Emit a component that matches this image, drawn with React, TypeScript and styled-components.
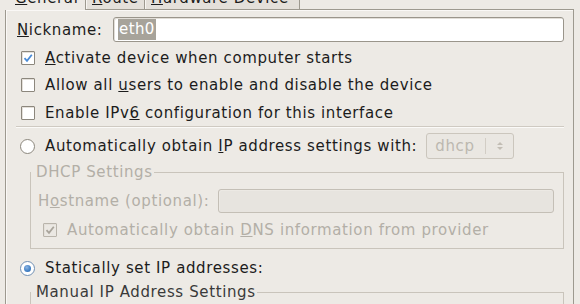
import React from 'react';
import styled, { createGlobalStyle } from 'styled-components';

const GlobalStyle = createGlobalStyle`
  html, body {
    margin: 0;
    padding: 0;
    background: #edeae5;
  }
  body {
    font-family: "DejaVu Sans", "Liberation Sans", sans-serif;
    font-size: 15px;
    letter-spacing: 0.62px;
    color: #1c1c1c;
  }
`;

const Page = styled.div`
  width: 580px;
  height: 304px;
  overflow: hidden;
  background: #edeae5;
`;

const TabBar = styled.div`
  display: flex;
  height: 24px;
  margin-top: -14px;
  padding-left: 5px;
`;

const Tab = styled.div<{ $active?: boolean; $width: number }>`
  box-sizing: border-box;
  width: ${(p) => p.$width}px;
  padding-left: ${(p) => (p.$active ? 10 : 6)}px;
  padding-top: 2px;
  border: 1px solid #9d998f;
  border-bottom: ${(p) => (p.$active ? 'none' : '1px solid #9d998f')};
  border-left: ${(p) => (p.$active ? 'none' : '1px solid #9d998f')};
  background: ${(p) => (p.$active ? '#edeae5' : '#e4e0da')};
  box-shadow: ${(p) => (p.$active ? 'none' : 'inset 1px 1px 0 #f7f5f2')};
  margin-left: ${(p) => (p.$active ? 0 : -1)}px;
  white-space: nowrap;
  overflow: hidden;
  position: relative;
  z-index: ${(p) => (p.$active ? 1 : 0)};
`;

const Panel = styled.div`
  box-sizing: border-box;
  width: 569px;
  height: 300px;
  margin-left: 5px;
  margin-top: -1px;
  border: 1px solid #9d998f;
  border-bottom: none;
  box-shadow: inset 1px 1px 0 #faf8f6;
  padding: 7px 9px 0 10px;
  display: flex;
  flex-direction: column;
`;

const Row = styled.div<{ $h: number; $indent?: number; $top?: number; $bottom?: number }>`
  display: flex;
  align-items: center;
  height: ${(p) => p.$h}px;
  padding-left: ${(p) => p.$indent ?? 0}px;
  margin-top: ${(p) => p.$top ?? 0}px;
  margin-bottom: ${(p) => p.$bottom ?? 0}px;
  flex-shrink: 0;
`;

const Label = styled.span<{ $disabled?: boolean; $w?: number }>`
  color: ${(p) => (p.$disabled ? '#b3afa7' : '#1c1c1c')};
  width: ${(p) => (p.$w ? `${p.$w}px` : 'auto')};
  flex-shrink: 0;
  white-space: nowrap;
`;

const TextInput = styled.div<{ $disabled?: boolean }>`
  box-sizing: border-box;
  flex: 1;
  height: 100%;
  border: 1px solid ${(p) => (p.$disabled ? '#c4bfb6' : '#9a958b')};
  border-radius: 3px;
  background: ${(p) => (p.$disabled ? '#e7e4df' : '#ffffff')};
  box-shadow: inset 1px 1px 0 ${(p) => (p.$disabled ? '#ece9e4' : '#e2ded8')};
  display: flex;
  align-items: center;
  padding-left: 4px;
`;

const Selection = styled.span`
  background: #a7a39a;
  color: #ffffff;
  padding: 1px 1px 2px 1px;
  letter-spacing: 0.4px;
`;

const Box = styled.span<{ $disabled?: boolean }>`
  box-sizing: border-box;
  width: 14px;
  height: 14px;
  border: 1px solid ${(p) => (p.$disabled ? '#b9b4ab' : '#8c877d')};
  border-radius: 1px;
  background: ${(p) => (p.$disabled ? '#ebe8e3' : '#ffffff')};
  box-shadow: inset 1px 1px 0 #e4e0da;
  display: flex;
  align-items: center;
  justify-content: center;
  flex-shrink: 0;
`;

const Radio = styled.span<{ $on?: boolean }>`
  box-sizing: border-box;
  width: 15px;
  height: 15px;
  border-radius: 50%;
  border: 1px solid ${(p) => (p.$on ? '#6f8fb3' : '#8c877d')};
  background: #ffffff;
  display: flex;
  align-items: center;
  justify-content: center;
  flex-shrink: 0;
`;

const Dot = styled.span`
  width: 7px;
  height: 7px;
  border-radius: 50%;
  background: radial-gradient(circle at 40% 35%, #8fb6e4 0%, #3f7fc4 60%, #2e63a3 100%);
`;

const Gap = styled.span<{ $w: number }>`
  width: ${(p) => p.$w}px;
  flex-shrink: 0;
`;

const Separator = styled.div`
  height: 1px;
  background: #cfcac2;
  border-bottom: 1px solid #fbfaf8;
  margin: 0 0 5px 0;
  flex-shrink: 0;
`;

const Combo = styled.div`
  box-sizing: border-box;
  width: 88px;
  height: 26px;
  margin-left: 9px;
  border: 1px solid #cbc6bd;
  border-radius: 3px;
  background: #eae7e2;
  display: flex;
  align-items: center;
  color: #bcb8b0;
`;

const ComboText = styled.span`
  flex: 1;
  padding-left: 8px;
`;

const ComboArrow = styled.span`
  width: 27px;
  height: 16px;
  border-left: 1px solid #d2cdc5;
  display: flex;
  align-items: center;
  justify-content: center;
`;

const Frame = styled.fieldset<{ $top: number }>`
  margin: ${(p) => p.$top}px 0 0 14px;
  padding: 0 9px 0 7px;
  border: 1px solid #c9c4bb;
  border-radius: 0;
  min-width: 0;
  flex-shrink: 0;
  display: flex;
  flex-direction: column;
`;

const Legend = styled.legend<{ $disabled?: boolean }>`
  padding: 0 1px 0 5px;
  margin-left: -7px;
  height: 16px;
  line-height: 16px;
  color: ${(p) => (p.$disabled ? '#b3afa7' : '#3a3a3a')};
`;

const CheckMark: React.FC<{ color: string }> = ({ color }) => (
  <svg width="10" height="10" viewBox="0 0 10 10">
    <path d="M1.5 5.2 L4 7.8 L8.8 1.8" fill="none" stroke={color} strokeWidth="1.8" />
  </svg>
);

const Arrows = () => (
  <svg width="8" height="12" viewBox="0 0 8 12">
    <path d="M1 5 L4 2 L7 5 Z" fill="#c2bdb4" />
    <path d="M1 7 L4 10 L7 7 Z" fill="#c2bdb4" />
  </svg>
);

const App: React.FC = () => {
  return (
    <Page>
      <GlobalStyle />
      <TabBar>
        <Tab $active $width={81}>
          <u>G</u>eneral
        </Tab>
        <Tab $width={60}>
          <u>R</u>oute
        </Tab>
        <Tab $width={156}>
          <u>H</u>ardware Device
        </Tab>
      </TabBar>
      <Panel>
        <Row $h={25} $indent={1}>
          <Label $w={96}>
            <u>N</u>ickname:
          </Label>
          <TextInput>
            <Selection>eth0</Selection>
          </TextInput>
        </Row>
        <Row $h={27} $indent={5} $top={2}>
          <Box>
            <CheckMark color="#4a8bd6" />
          </Box>
          <Gap $w={10} />
          <Label>
            <u>A</u>ctivate device when computer starts
          </Label>
        </Row>
        <Row $h={27} $indent={5}>
          <Box />
          <Gap $w={10} />
          <Label>
            Allow all <u>u</u>sers to enable and disable the device
          </Label>
        </Row>
        <Row $h={27} $indent={5} $top={1}>
          <Box />
          <Gap $w={10} />
          <Label>
            Enable IPv<u>6</u> configuration for this interface
          </Label>
        </Row>
        <Separator />
        <Row $h={26} $indent={4}>
          <Radio />
          <Gap $w={10} />
          <Label>
            Automatically obtain <u>I</u>P address settings with:
          </Label>
          <Combo>
            <ComboText>dhcp</ComboText>
            <ComboArrow>
              <Arrows />
            </ComboArrow>
          </Combo>
        </Row>
        <Frame $top={5}>
          <Legend $disabled>DHCP Settings</Legend>
          <Row $h={24} $top={9}>
            <Label $disabled $w={180}>
              H<u>o</u>stname (optional):
            </Label>
            <TextInput $disabled />
          </Row>
          <Row $h={22} $indent={5} $top={6} $bottom={7}>
            <Box $disabled>
              <CheckMark color="#a9a49b" />
            </Box>
            <Gap $w={10} />
            <Label $disabled>
              Automatically obtain <u>D</u>NS information from provider
            </Label>
          </Row>
        </Frame>
        <Row $h={26} $indent={4} $top={6}>
          <Radio $on>
            <Dot />
          </Radio>
          <Gap $w={10} />
          <Label>Statically set IP addresses:</Label>
        </Row>
        <Frame $top={3}>
          <Legend>Manual IP Address Settings</Legend>
          <Row $h={24} $indent={222} $top={5}>
            <TextInput />
          </Row>
        </Frame>
      </Panel>
    </Page>
  );
};

export default App;
